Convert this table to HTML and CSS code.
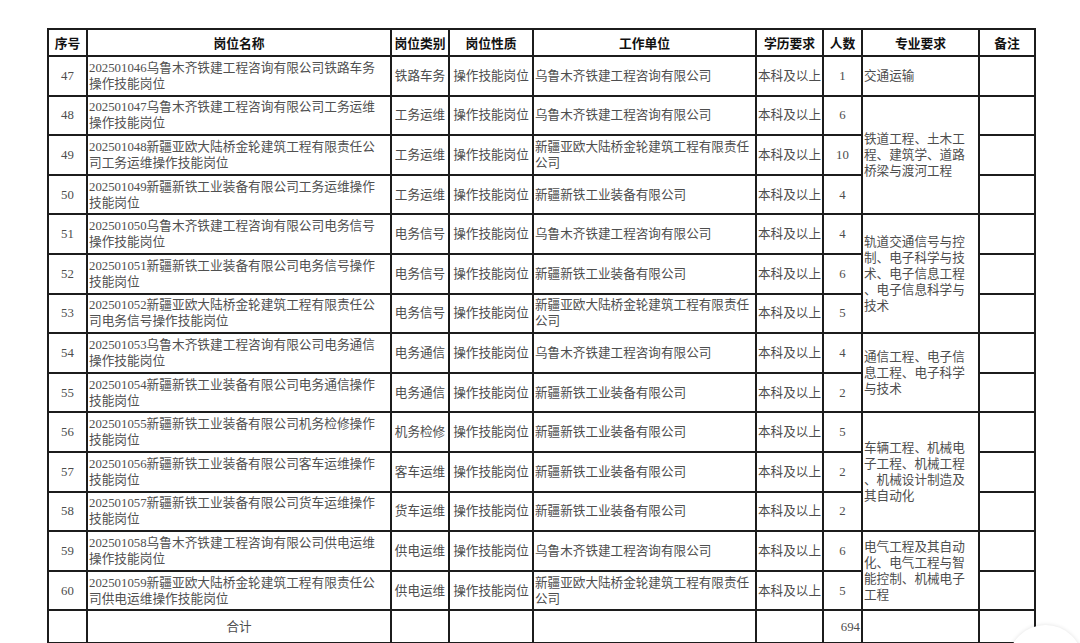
FILE: index.html
```html
<!DOCTYPE html>
<html lang="zh-CN">
<head>
<meta charset="utf-8">
<title>岗位表</title>
<link rel="stylesheet" href="styles.css">
</head>
<body>
<div class="page">
<table class="jobs">
<colgroup>
<col class="c-no"><col class="c-name"><col class="c-type"><col class="c-kind"><col class="c-unit"><col class="c-edu"><col class="c-num"><col class="c-major"><col class="c-note">
</colgroup>
<thead>
<tr class="head">
<th>序号</th><th>岗位名称</th><th>岗位类别</th><th>岗位性质</th><th>工作单位</th><th>学历要求</th><th>人数</th><th>专业要求</th><th>备注</th>
</tr>
</thead>
<tbody>
<tr>
<td class="no">47</td><td class="name"><span class="code">202501046</span>乌鲁木齐铁建工程咨询有限公司铁路车务<br>操作技能岗位</td><td class="ctr">铁路车务</td><td class="ctr">操作技能岗位</td><td class="unit">乌鲁木齐铁建工程咨询有限公司</td><td class="edu">本科及以上</td><td class="no">1</td><td class="major">交通运输</td><td></td>
</tr>
<tr>
<td class="no">48</td><td class="name"><span class="code">202501047</span>乌鲁木齐铁建工程咨询有限公司工务运维<br>操作技能岗位</td><td class="ctr">工务运维</td><td class="ctr">操作技能岗位</td><td class="unit">乌鲁木齐铁建工程咨询有限公司</td><td class="edu">本科及以上</td><td class="no">6</td><td class="major" rowspan="3">铁道工程、土木工<br>程、建筑学、道路<br>桥梁与渡河工程</td><td></td>
</tr>
<tr>
<td class="no">49</td><td class="name"><span class="code">202501048</span>新疆亚欧大陆桥金轮建筑工程有限责任公<br>司工务运维操作技能岗位</td><td class="ctr">工务运维</td><td class="ctr">操作技能岗位</td><td class="unit">新疆亚欧大陆桥金轮建筑工程有限责任<br>公司</td><td class="edu">本科及以上</td><td class="no">10</td><td></td>
</tr>
<tr>
<td class="no">50</td><td class="name"><span class="code">202501049</span>新疆新铁工业装备有限公司工务运维操作<br>技能岗位</td><td class="ctr">工务运维</td><td class="ctr">操作技能岗位</td><td class="unit">新疆新铁工业装备有限公司</td><td class="edu">本科及以上</td><td class="no">4</td><td></td>
</tr>
<tr>
<td class="no">51</td><td class="name"><span class="code">202501050</span>乌鲁木齐铁建工程咨询有限公司电务信号<br>操作技能岗位</td><td class="ctr">电务信号</td><td class="ctr">操作技能岗位</td><td class="unit">乌鲁木齐铁建工程咨询有限公司</td><td class="edu">本科及以上</td><td class="no">4</td><td class="major" rowspan="3">轨道交通信号与控<br>制、电子科学与技<br>术、电子信息工程<br>、电子信息科学与<br>技术</td><td></td>
</tr>
<tr>
<td class="no">52</td><td class="name"><span class="code">202501051</span>新疆新铁工业装备有限公司电务信号操作<br>技能岗位</td><td class="ctr">电务信号</td><td class="ctr">操作技能岗位</td><td class="unit">新疆新铁工业装备有限公司</td><td class="edu">本科及以上</td><td class="no">6</td><td></td>
</tr>
<tr>
<td class="no">53</td><td class="name"><span class="code">202501052</span>新疆亚欧大陆桥金轮建筑工程有限责任公<br>司电务信号操作技能岗位</td><td class="ctr">电务信号</td><td class="ctr">操作技能岗位</td><td class="unit">新疆亚欧大陆桥金轮建筑工程有限责任<br>公司</td><td class="edu">本科及以上</td><td class="no">5</td><td></td>
</tr>
<tr>
<td class="no">54</td><td class="name"><span class="code">202501053</span>乌鲁木齐铁建工程咨询有限公司电务通信<br>操作技能岗位</td><td class="ctr">电务通信</td><td class="ctr">操作技能岗位</td><td class="unit">乌鲁木齐铁建工程咨询有限公司</td><td class="edu">本科及以上</td><td class="no">4</td><td class="major" rowspan="2">通信工程、电子信<br>息工程、电子科学<br>与技术</td><td></td>
</tr>
<tr>
<td class="no">55</td><td class="name"><span class="code">202501054</span>新疆新铁工业装备有限公司电务通信操作<br>技能岗位</td><td class="ctr">电务通信</td><td class="ctr">操作技能岗位</td><td class="unit">新疆新铁工业装备有限公司</td><td class="edu">本科及以上</td><td class="no">2</td><td></td>
</tr>
<tr>
<td class="no">56</td><td class="name"><span class="code">202501055</span>新疆新铁工业装备有限公司机务检修操作<br>技能岗位</td><td class="ctr">机务检修</td><td class="ctr">操作技能岗位</td><td class="unit">新疆新铁工业装备有限公司</td><td class="edu">本科及以上</td><td class="no">5</td><td class="major" rowspan="3">车辆工程、机械电<br>子工程、机械工程<br>、机械设计制造及<br>其自动化</td><td></td>
</tr>
<tr>
<td class="no">57</td><td class="name"><span class="code">202501056</span>新疆新铁工业装备有限公司客车运维操作<br>技能岗位</td><td class="ctr">客车运维</td><td class="ctr">操作技能岗位</td><td class="unit">新疆新铁工业装备有限公司</td><td class="edu">本科及以上</td><td class="no">2</td><td></td>
</tr>
<tr>
<td class="no">58</td><td class="name"><span class="code">202501057</span>新疆新铁工业装备有限公司货车运维操作<br>技能岗位</td><td class="ctr">货车运维</td><td class="ctr">操作技能岗位</td><td class="unit">新疆新铁工业装备有限公司</td><td class="edu">本科及以上</td><td class="no">2</td><td></td>
</tr>
<tr>
<td class="no">59</td><td class="name"><span class="code">202501058</span>乌鲁木齐铁建工程咨询有限公司供电运维<br>操作技能岗位</td><td class="ctr">供电运维</td><td class="ctr">操作技能岗位</td><td class="unit">乌鲁木齐铁建工程咨询有限公司</td><td class="edu">本科及以上</td><td class="no">6</td><td class="major" rowspan="2">电气工程及其自动<br>化、电气工程与智<br>能控制、机械电子<br>工程</td><td></td>
</tr>
<tr>
<td class="no">60</td><td class="name"><span class="code">202501059</span>新疆亚欧大陆桥金轮建筑工程有限责任公<br>司供电运维操作技能岗位</td><td class="ctr">供电运维</td><td class="ctr">操作技能岗位</td><td class="unit">新疆亚欧大陆桥金轮建筑工程有限责任<br>公司</td><td class="edu">本科及以上</td><td class="no">5</td><td></td>
</tr>
<tr class="total">
<td></td><td class="ctr sum">合计</td><td></td><td></td><td></td><td></td><td class="tot">694</td><td></td><td></td>
</tr>
</tbody>
</table>
<div class="fab"></div>
</div>
</body>
</html>
```

FILE: styles.css
```css
html, body {
  margin: 0;
  padding: 0;
  background: #ffffff;
  overflow: hidden;
}
.page {
  width: 1080px;
  height: 643px;
  padding: 28px 0 0 47px;
  box-sizing: border-box;
  position: relative;
  overflow: hidden;
}
.jobs {
  border-collapse: collapse;
  table-layout: fixed;
  width: 989px;
  font-family: "Liberation Serif", "Noto Sans CJK SC", serif;
  font-size: 12.6px;
  color: #4d4d4d;
}
.c-no { width: 39px; }
.c-name { width: 304px; }
.c-type { width: 58px; }
.c-kind { width: 84px; }
.c-unit { width: 223px; }
.c-edu { width: 67px; }
.c-num { width: 39px; }
.c-major { width: 117px; }
.c-note { width: 56px; }

.jobs th, .jobs td {
  border: 2px solid #1c1c1c;
  padding: 0 1px;
  vertical-align: middle;
  line-height: 16px;
  white-space: nowrap;
  overflow: hidden;
}
.head { height: 27px; }
.jobs th {
  font-family: "Noto Sans CJK SC", sans-serif;
  font-weight: 700;
  font-size: 12.8px;
  color: #111111;
  text-align: center;
}
.jobs tbody tr { height: 39.6px; }
.jobs tbody tr.total { height: 33px; }
.no {
  text-align: center;
  font-size: 12.8px;
}
.name {
  font-size: 12.7px;
  text-align: left;
  padding-left: 2px;
  color: #505050;
}
.code {
  font-family: "Liberation Serif", serif;
  font-size: 12.8px;
}
.ctr { text-align: center; }
.unit { text-align: left; padding-left: 2px; }
.edu { text-align: left; padding-left: 1px; }
.major { text-align: left; padding-left: 2px; font-size: 12.6px; }
.tot { text-align: right; font-size: 12.8px; padding-right: 0; }
.sum { font-size: 12.6px; }
.fab {
  position: absolute;
  left: 1008px;
  top: 625px;
  width: 75px;
  height: 75px;
  border-radius: 50%;
  background: #ffffff;
  box-shadow: 0 0 4px rgba(0, 0, 0, 0.12);
}
```
